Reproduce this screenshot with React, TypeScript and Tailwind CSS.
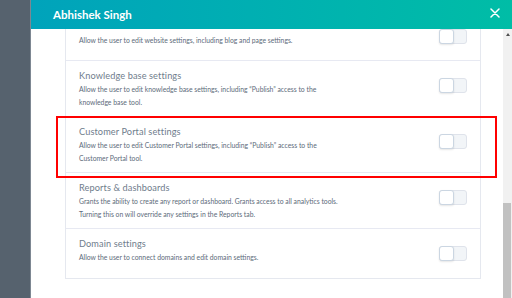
import React from "react";

const rows = [
  {
    title: "",
    desc: ["Allow the user to edit website settings, including blog and page settings."],
  },
  {
    title: "Knowledge base settings",
    desc: [
      "Allow the user to edit knowledge base settings, including \u201cPublish\u201d access to the",
      "knowledge base tool.",
    ],
  },
  {
    title: "Customer Portal settings",
    desc: [
      "Allow the user to edit Customer Portal settings, including \u201cPublish\u201d access to the",
      "Customer Portal tool.",
    ],
  },
  {
    title: "Reports & dashboards",
    desc: [
      "Grants the ability to create any report or dashboard. Grants access to all analytics tools.",
      "Turning this on will override any settings in the Reports tab.",
    ],
  },
  {
    title: "Domain settings",
    desc: ["Allow the user to connect domains and edit domain settings."],
  },
];

function Toggle() {
  return (
    <div className="mt-[9px] flex h-[15px] w-[28px] shrink-0 rounded-[3px] border border-[#dfe3eb] bg-[#f2f5f8]">
      <div className="-ml-px -mt-px h-[15px] w-[15px] rounded-[3px] border border-[#cbd6e2] bg-white shadow-[0_1px_2px_rgba(0,0,0,0.1)]" />
    </div>
  );
}

export default function App() {
  return (
    <div
      className="relative flex h-[298px] w-[512px] overflow-hidden bg-white"
      style={{ fontFamily: "Lato, 'Open Sans', sans-serif" }}
    >
      <div className="h-full w-[31px] shrink-0 border-r border-[#7d8792] bg-[#56626e]" />
      <div className="flex min-w-0 flex-1 flex-col">
        <div className="flex h-[29px] shrink-0 items-center justify-between bg-gradient-to-r from-[#00a3bb] to-[#00bda6] pl-[22px] pr-[12px]">
          <span className="text-[11.5px] font-bold text-white">Abhishek Singh</span>
          <svg width="10" height="10" viewBox="0 0 10 10" className="-mt-[3px]">
            <path d="M1 1 L9 9 M9 1 L1 9" stroke="white" strokeWidth="1.5" strokeLinecap="round" />
          </svg>
        </div>
        <div className="flex min-h-0 flex-1">
          <div className="min-w-0 flex-1 overflow-hidden">
            <div className="-mt-[18px] ml-[34px] w-[416px] border border-[#e5e8ef]">
              {rows.map((r, i) => (
                <div
                  key={i}
                  className={
                    "flex min-h-[49px] items-start justify-between pl-[13px] pr-[13px] pt-[8px] pb-[7px] " +
                    (i < rows.length - 1 ? "border-b border-[#e7e9f2]" : "")
                  }
                >
                  <div>
                    {r.title ? (
                      <div className="text-[9.2px] leading-[14px] tracking-[0.1px] text-[#6f7d8c]">{r.title}</div>
                    ) : (
                      <div className="h-[14px]" />
                    )}
                    {r.desc.map((d) => (
                      <div key={d} className="text-[6.8px] leading-[13px] text-[#5d6b7a]">
                        {d}
                      </div>
                    ))}
                  </div>
                  <Toggle />
                </div>
              ))}
            </div>
          </div>
          <div className="flex w-[9px] shrink-0 flex-col bg-[#f1f1f1]">
            <div className="flex h-[10px] items-center justify-center">
              <div className="h-0 w-0 border-x-[2.5px] border-b-[3px] border-x-transparent border-b-[#505050]" />
            </div>
            <div className="flex-1" />
            <div className="h-[95px] w-[8px] bg-[#c1c1c1]" />
          </div>
        </div>
      </div>
      <div className="pointer-events-none absolute left-[56px] top-[116px] h-[62px] w-[441px] border-2 border-[#ff0000]" />
    </div>
  );
}
